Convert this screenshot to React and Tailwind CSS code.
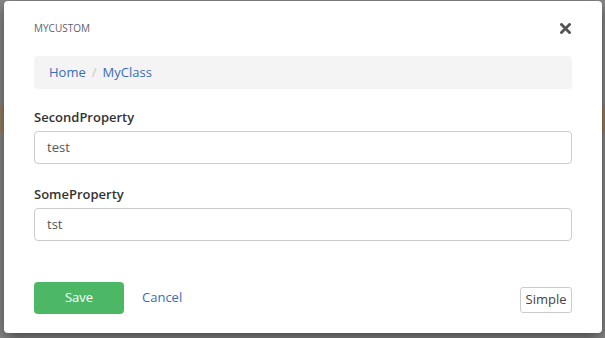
export default function App() {
  const font = { fontFamily: '"Open Sans", "Liberation Sans", sans-serif' };
  return (
    <div className="relative w-[605px] h-[338px] overflow-hidden bg-[#8a8a8a]" style={font}>
      {/* page behind the backdrop */}
      <div className="flex flex-col h-full">
        <div className="h-[105px]" />
        <div className="h-[28px] bg-[#9b8163]" />
        <div className="flex-1" />
      </div>

      {/* modal */}
      <div className="absolute left-[4px] top-[1px] w-[598px] h-[332px] bg-white rounded-[4px] shadow-[0_5px_15px_rgba(0,0,0,0.5)] px-[30px] pt-[19px]">
        <div className="flex items-center justify-between h-[16px]">
          <span className="text-[10px] leading-[16px] text-[#5f5f6b]">MYCUSTOM</span>
          <svg width="11" height="11" viewBox="0 0 11 11" className="mr-[1px]">
            <path d="M1.5 1.5 L9.5 9.5 M9.5 1.5 L1.5 9.5" stroke="#555" strokeWidth="2.8" strokeLinecap="square" />
          </svg>
        </div>

        <div className="mt-[20px] h-[33px] bg-[#f4f4f4] rounded-[4px] flex items-center px-[15px] text-[13px] text-[#3a6db3]">
          <span>Home</span>
          <span className="text-[#c8c8c8] px-[6px]">/</span>
          <span>MyClass</span>
        </div>

        <div className="mt-[19px] text-[13px] leading-[18px] font-semibold text-[#333]">SecondProperty</div>
        <div className="mt-[5px] h-[33px] border border-[#cccccc] rounded-[4px] flex items-center px-[12px] text-[13px] text-[#555]">
          test
        </div>

        <div className="mt-[21px] text-[13px] leading-[18px] font-semibold text-[#333]">SomeProperty</div>
        <div className="mt-[5px] h-[33px] border border-[#cccccc] rounded-[4px] flex items-center px-[12px] text-[13px] text-[#555]">
          tst
        </div>

        <div className="mt-[41px] flex items-start">
          <button className="w-[90px] h-[32px] rounded-[4px] bg-[#4cb866] text-white text-[13px]">Save</button>
          <span className="ml-[18px] h-[32px] flex items-center text-[13px] text-[#3a6db3]">Cancel</span>
          <div className="flex-1" />
          <button className="mt-[5px] h-[26px] w-[52px] border border-[#cccccc] rounded-[3px] bg-white text-[13px] text-[#444]">Simple</button>
        </div>
      </div>
    </div>
  );
}
